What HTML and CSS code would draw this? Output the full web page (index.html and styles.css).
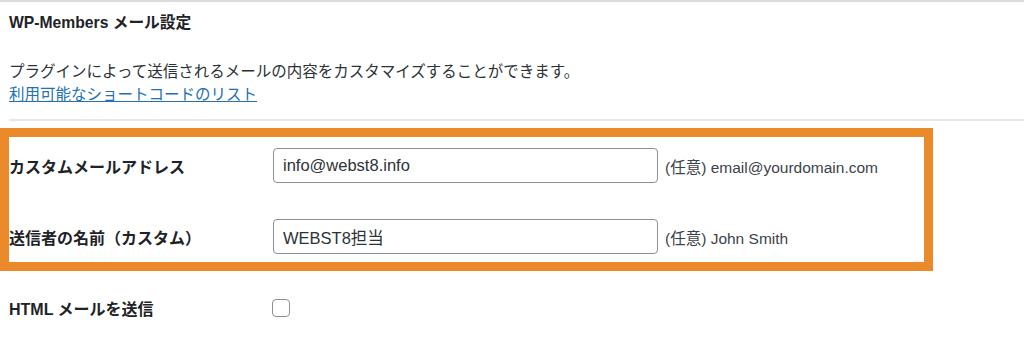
FILE: index.html
```html
<!DOCTYPE html>
<html lang="ja">
<head>
    <meta charset="UTF-8">
    <meta name="viewport" content="width=device-width, initial-scale=1.0">
    <title>WP-Members メール設定</title>
    <link rel="stylesheet" href="styles.css">
</head>
<body>
    <div class="settings">
        <h2 class="section-title">WP-Members メール設定</h2>
        <p class="section-desc">
            プラグインによって送信されるメールの内容をカスタマイズすることができます。<br>
            <a href="#" class="shortcode-link">利用可能なショートコードのリスト</a>
        </p>

        <hr class="divider">

        <!-- highlighted fields -->
        <div class="highlight">
            <div class="field-row">
                <label class="field-label" for="from-email">カスタムメールアドレス</label>
                <input class="text-input" id="from-email" type="text" value="info@webst8.info">
                <span class="field-hint">(任意) email@yourdomain.com</span>
            </div>
            <div class="field-row">
                <label class="field-label" for="from-name">送信者の名前（カスタム）</label>
                <input class="text-input" id="from-name" type="text" value="WEBST8担当">
                <span class="field-hint">(任意) John Smith</span>
            </div>
        </div>

        <div class="field-row plain-row">
            <label class="field-label" for="html-mail">HTML メールを送信</label>
            <span class="checkbox" id="html-mail"></span>
        </div>
    </div>
</body>
</html>
```

FILE: styles.css
```css
* {
    margin: 0;
    padding: 0;
    box-sizing: border-box;
}

body {
    font-family: "Liberation Sans", "Noto Sans CJK JP", sans-serif;
    background: #fff;
    color: #1d2327;
    width: 1024px;
    height: 359px;
    overflow: hidden;
}

.settings {
    border-top: 2px solid #dcdcde;
}

.section-title {
    font-size: 15.7px;
    font-weight: bold;
    line-height: 24px;
    margin: 9px 0 0 9px;
    color: #1d2327;
}

.section-desc {
    font-size: 15.5px;
    line-height: 23px;
    margin: 25px 0 0 9px;
    color: #2c3338;
}

.shortcode-link {
    color: #2271b1;
    text-decoration: underline;
}

.divider {
    border: none;
    border-top: 2px solid #e8e8ea;
    margin: 13px 0 0 9px;
}

.highlight {
    width: 933px;
    margin-top: 7px;
    border: 9px solid #eb8a2a;
    padding: 11px 0 8px;
    display: flex;
    flex-direction: column;
    gap: 36px;
}

.field-row {
    display: flex;
    align-items: center;
    height: 35px;
}

.field-label {
    width: 264px;
    font-size: 16px;
    font-weight: bold;
    color: #1d2327;
}

.text-input {
    width: 385px;
    height: 35px;
    border: 1px solid #8c8f94;
    border-radius: 4px;
    padding: 0 9px;
    font-family: inherit;
    font-size: 16.5px;
    color: #2c3338;
    background: #fff;
}

.field-hint {
    margin-left: 7px;
    font-size: 15.5px;
    color: #3c434a;
}

.plain-row {
    margin-top: 19px;
    padding-left: 9px;
}

.checkbox {
    display: block;
    width: 18px;
    height: 18px;
    margin-left: -1px;
    border: 1px solid #8c8f94;
    border-radius: 4px;
    background: #fff;
}
```
